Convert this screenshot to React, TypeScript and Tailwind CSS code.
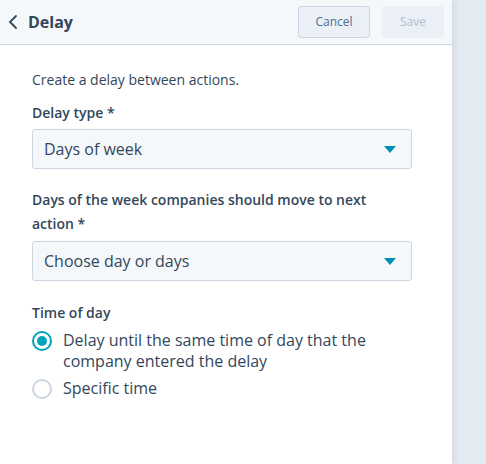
import React from "react";

function Select({ value }: { value: string }) {
  return (
    <div className="flex items-center justify-between h-10 w-[380px] bg-[#f5f8fa] border border-[#cbd6e2] rounded-[3px] pl-[11px] pr-[15px]">
      <span className="text-[16px] text-[#33475b]">{value}</span>
      <svg width="12" height="7" viewBox="0 0 12 7">
        <path d="M0 0 H12 L6 7 Z" fill="#0091ae" />
      </svg>
    </div>
  );
}

function Radio({ checked, children }: { checked?: boolean; children: React.ReactNode }) {
  return (
    <div className="flex items-start gap-[11px]">
      <div
        className={
          "mt-[1px] w-5 h-5 shrink-0 rounded-full border-2 flex items-center justify-center bg-white " +
          (checked ? "border-[#00a4bd]" : "border-[#cbd6e2]")
        }
      >
        {checked && <div className="w-[10px] h-[10px] rounded-full bg-[#00a4bd]" />}
      </div>
      <span className="text-[16px] leading-[21px] text-[#33475b]">{children}</span>
    </div>
  );
}

export default function App() {
  return (
    <div
      className="w-[486px] h-[464px] flex bg-[#e5ebf3] overflow-hidden"
      style={{ fontFamily: "'Open Sans', sans-serif" }}
    >
      <div className="w-[452px] h-full bg-white flex flex-col shadow-[2px_0_6px_rgba(45,62,80,0.12)]">
        <div className="h-[45px] shrink-0 bg-[#f5f8fa] border-b border-[#cbd6e2] flex items-center pl-[7px] pr-2">
          <svg width="12" height="16" viewBox="0 0 12 16" className="mr-[9px]">
            <path d="M9 2 L3 8 L9 14" fill="none" stroke="#33475b" strokeWidth="1.8" strokeLinecap="round" />
          </svg>
          <span className="text-[16px] font-bold text-[#33475b]">Delay</span>
          <div className="ml-auto flex gap-3 items-center">
            <button className="h-8 w-[72px] rounded-[3px] border border-[#cbd6e2] bg-[#eaf0f6] text-[12px] text-[#506e91]">
              Cancel
            </button>
            <button className="h-8 w-[62px] rounded-[3px] bg-[#eaf0f6] text-[12px] text-[#b0c1d4]">
              Save
            </button>
          </div>
        </div>
        <div className="pl-8 pt-[25px] flex flex-col text-[#33475b]">
          <p className="text-[14px] leading-[20px]">Create a delay between actions.</p>
          <p className="mt-[13px] text-[14px] font-semibold leading-[20px]">Delay type *</p>
          <div className="mt-[6px]">
            <Select value="Days of week" />
          </div>
          <p className="mt-[19px] w-[360px] text-[14px] font-semibold leading-[24px]">
            Days of the week companies should move to next action *
          </p>
          <div className="mt-[5px]">
            <Select value="Choose day or days" />
          </div>
          <p className="mt-[22px] text-[14px] font-semibold leading-[20px]">Time of day</p>
          <div className="mt-[7px] flex flex-col gap-[6px] w-[370px]">
            <Radio checked>Delay until the same time of day that the company entered the delay</Radio>
            <Radio>Specific time</Radio>
          </div>
        </div>
      </div>
    </div>
  );
}
